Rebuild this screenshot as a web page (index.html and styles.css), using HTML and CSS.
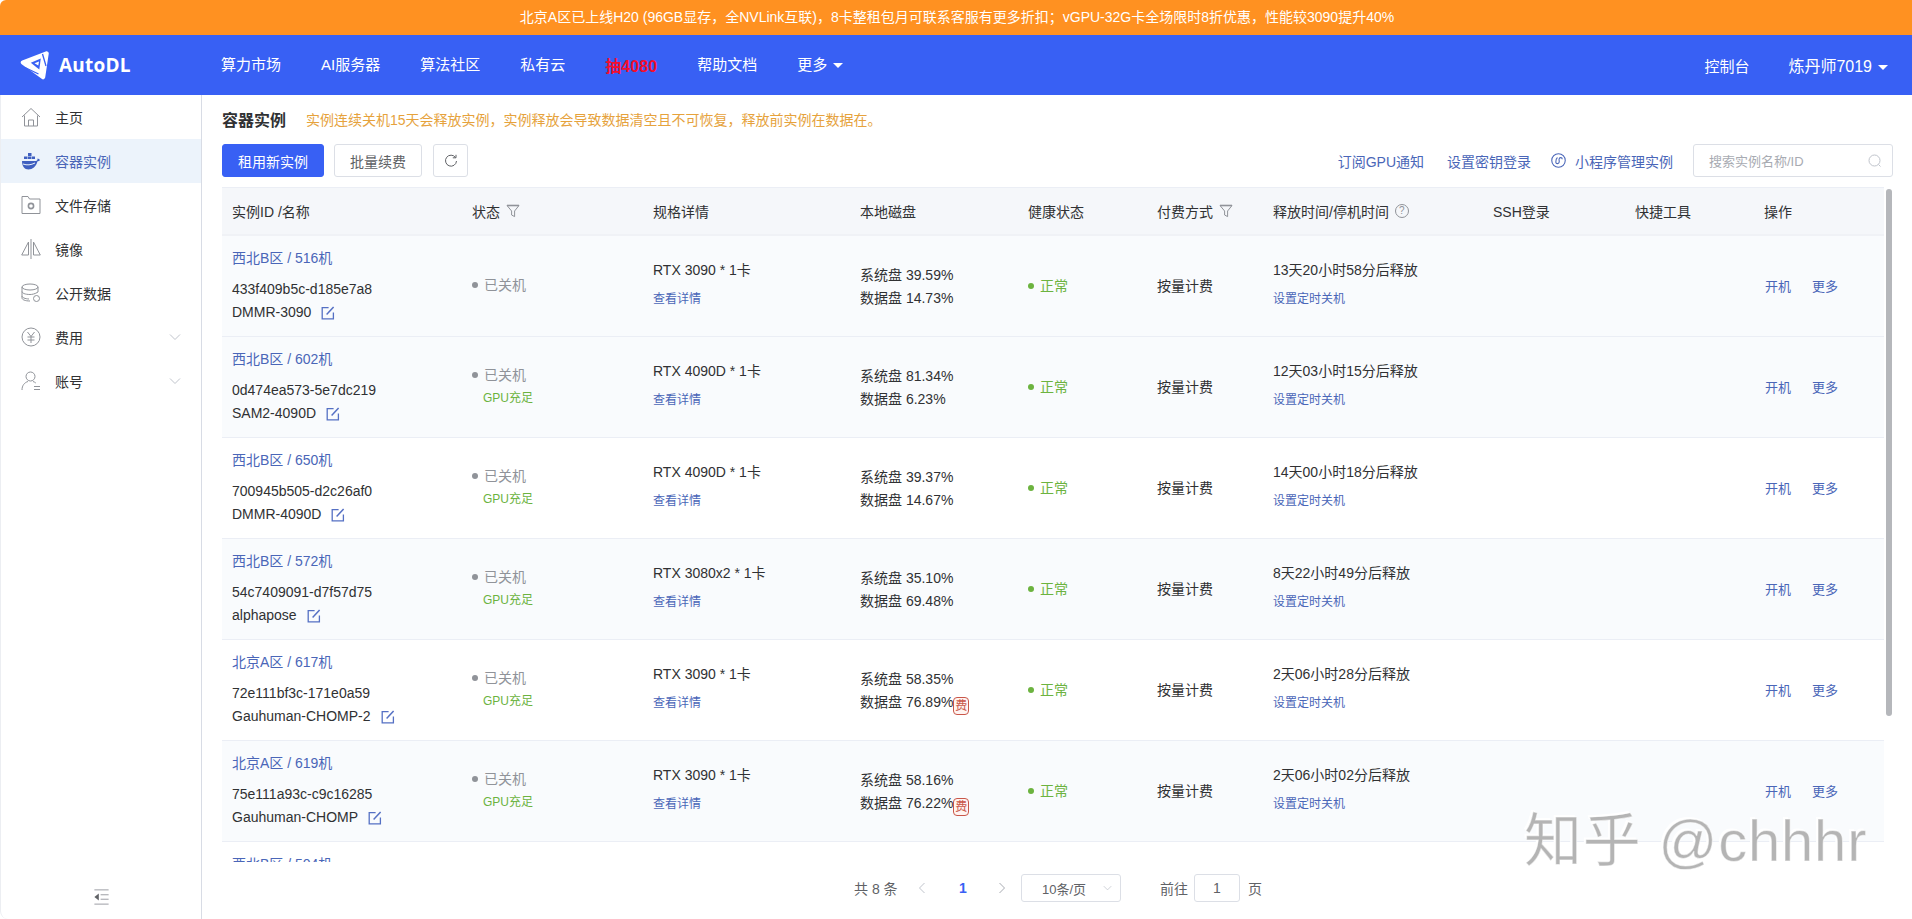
FILE: index.html
```html
<!DOCTYPE html>
<html lang="zh-CN">
<head>
<meta charset="utf-8">
<title>AutoDL</title>
<link rel="stylesheet" href="styles.css">
</head>
<body>
<svg class="defs" width="0" height="0" aria-hidden="true">
  <symbol id="edit" viewBox="0 0 14 14"><path d="M7.600 1.600H1.200v11.200h11.200V6.400" fill="none" stroke="currentColor" stroke-width="1.300"/><path d="M5.600 8.600 12.600.9" fill="none" stroke="currentColor" stroke-width="1.500"/></symbol>
  <symbol id="funnel" viewBox="0 0 14 14"><path d="M1 1.500h12L8.600 7v5.600L5.600 11V7z" fill="none" stroke="currentColor" stroke-width="1"/><path d="M1 1.500h12" fill="none" stroke="currentColor" stroke-width="1.600"/></symbol>
</svg>

<div class="banner">北京A区已上线H20 (96GB显存，全NVLink互联)，8卡整租包月可联系客服有更多折扣；vGPU-32G卡全场限时8折优惠，性能较3090提升40%</div>

<header class="topbar">
  <div class="logo">
    <svg class="logo-mark" viewBox="0 0 30 30"><path d="M26.500 3.500 3 12.500 23 27z" fill="#fff" stroke="#fff" stroke-width="4.500" stroke-linejoin="round"/><path d="M10.800 12.800 20.800 8.600 19.300 19.500z" fill="#3860f4"/><path d="M5 17.500 18.500 24M22.500 4l3.500 12" fill="none" stroke="#3860f4" stroke-width="1.300"/><path d="M14.500 13.200 19 11.500 18.300 15.600z" fill="#fff"/></svg>
    <span class="logo-text">AutoDL</span>
  </div>
  <nav class="nav">
    <a>算力市场</a><a>AI服务器</a><a>算法社区</a><a>私有云</a><a class="hot">抽4080</a><a>帮助文档</a><a>更多<i class="caret"></i></a>
  </nav>
  <div class="user">
    <a>控制台</a><a class="uname">炼丹师7019<i class="caret"></i></a>
  </div>
</header>

<div class="body">
  <aside class="side">
    <ul class="menu">
      <li><svg class="mi" viewBox="0 0 20 20"><path d="M1 10 10 1.500 19 10M3.500 8.500V19h13V8.500M7.500 19v-6h5v6" fill="none" stroke="currentColor"/></svg>主页</li>
      <li class="on"><svg class="mi" viewBox="0 0 20 20"><path d="M1 10h14c1 0 1.600-1.200 1.600-2.500 1 .2 1.800.8 2.400 1.600-.8 1-1.600 1.400-2.600 1.500C15 16 11.500 18.500 7.500 18.500 3.500 18.500 1 15 1 10Z" fill="currentColor"/><path d="M3 5.500h3.500V8H3zM7 5.500h3.500V8H7zM7 2h3.500v3H7zM11 5.500h3V8h-3z" fill="currentColor"/><path d="M2 13c4 1.500 8 1 12-1" fill="none" stroke="#ecf3fb"/></svg>容器实例</li>
      <li><svg class="mi" viewBox="0 0 20 20"><path d="M1 18.500V1.500h6l1.500 2.500h10.500v14.500z" fill="none" stroke="currentColor"/><circle cx="10" cy="11" r="2.600" fill="none" stroke="currentColor" stroke-width="1.600"/></svg>文件存储</li>
      <li><svg class="mi" viewBox="0 0 20 20"><path d="M10 0v20" stroke="currentColor" fill="none"/><path d="M7.500 3v13H.7zM12.500 3v13h6.800z" fill="none" stroke="currentColor"/></svg>镜像</li>
      <li><svg class="mi" viewBox="0 0 20 20"><ellipse cx="9" cy="4" rx="8" ry="3" fill="none" stroke="currentColor"/><path d="M1 4v11c0 1.600 3 3 8 3M1 8.500c0 1.600 3 3 8 3 2 0 5-.5 8-2.500M1 13c0 1.600 3 2.800 7 3M17 4v5" fill="none" stroke="currentColor"/><circle cx="15.500" cy="15.500" r="3" fill="none" stroke="currentColor"/></svg>公开数据</li>
      <li><svg class="mi" viewBox="0 0 20 20"><circle cx="10" cy="10" r="9" fill="none" stroke="currentColor"/><path d="M6.500 5 10 9.500 13.500 5M6.500 10h7M6.500 13h7M10 9.500V16" fill="none" stroke="currentColor"/></svg>费用<svg class="chev" viewBox="0 0 12 8"><path d="m1 1.500 5 5 5-5" fill="none" stroke="currentColor"/></svg></li>
      <li><svg class="mi" viewBox="0 0 20 20"><circle cx="9.500" cy="5.500" r="4.500" fill="none" stroke="currentColor"/><path d="M1 19c0-4.500 2.500-7.500 6-8.500M12 10.500c1 .3 2 .8 2.800 1.500M13 15.500h6M13 18.500h6" fill="none" stroke="currentColor"/></svg>账号<svg class="chev" viewBox="0 0 12 8"><path d="m1 1.500 5 5 5-5" fill="none" stroke="currentColor"/></svg></li>
    </ul>
    <div class="collapse"><svg viewBox="0 0 18 18" width="17" height="16"><path d="M1 1h16M8 6.500h9M8 11.500h9M1 17h16" stroke="#909399" fill="none"/><path d="M6 5v8L1 9z" fill="#606266"/></svg></div>
  </aside>

  <main class="main">
    <div class="title-row">
      <h1>容器实例</h1>
      <span class="warn">实例连续关机15天会释放实例，实例释放会导致数据清空且不可恢复，释放前实例在数据在。</span>
    </div>
    <div class="tools">
      <button class="btn primary">租用新实例</button>
      <button class="btn">批量续费</button>
      <button class="btn icon"><svg viewBox="0 0 14 14" width="14" height="14"><path d="M11.500 3.500A5.500 5.500 0 1 0 12.500 7" fill="none" stroke="#606266"/><path d="M8.800 3.800h3.200V.8" fill="none" stroke="#606266"/></svg></button>
      <div class="tools-right">
        <a class="notify">订阅GPU通知</a>
        <a>设置密钥登录</a>
        <a class="mini"><svg viewBox="0 0 14 14" width="15" height="15"><circle cx="7" cy="7" r="6.300" fill="none" stroke="currentColor"/><path d="M4.500 8.500c0 2 3 1.800 3.200-.2L7.500 5.800c.2-2 3-2 3 0M6 4.200C4.800 5 4.500 6 4.500 8.500" fill="none" stroke="currentColor"/></svg>小程序管理实例</a>
        <label class="search"><span>搜索实例名称/ID</span><svg viewBox="0 0 14 14" width="14" height="14"><circle cx="6.500" cy="6.500" r="5.500" fill="none" stroke="#c0c4cc"/><path d="m10.500 10.500 2 2" stroke="#c0c4cc"/></svg></label>
      </div>
    </div>

    <div class="table-wrap">
      <div class="table">
        <div class="row head">
          <div>实例ID /名称</div>
          <div>状态<svg class="filter"><use href="#funnel"/></svg></div>
          <div>规格详情</div>
          <div>本地磁盘</div>
          <div>健康状态</div>
          <div>付费方式<svg class="filter"><use href="#funnel"/></svg></div>
          <div>释放时间/停机时间<span class="help">?</span></div>
          <div>SSH登录</div>
          <div>快捷工具</div>
          <div>操作</div>
        </div>

        <div class="row tint">
          <div class="id"><a>西北B区 / 516机</a><p>433f409b5c-d185e7a8</p><p>DMMR-3090<svg class="edit"><use href="#edit"/></svg></p></div>
          <div class="st"><p class="off">已关机</p></div>
          <div class="spec"><p>RTX 3090 * 1卡</p><a>查看详情</a></div>
          <div class="disk"><p>系统盘 39.59%</p><p>数据盘 14.73%</p></div>
          <div class="ok">正常</div>
          <div>按量计费</div>
          <div class="rel"><p>13天20小时58分后释放</p><a>设置定时关机</a></div>
          <div></div><div></div>
          <div class="ops"><a>开机</a><a>更多</a></div>
        </div>

        <div class="row tint">
          <div class="id"><a>西北B区 / 602机</a><p>0d474ea573-5e7dc219</p><p>SAM2-4090D<svg class="edit"><use href="#edit"/></svg></p></div>
          <div class="st"><p class="off">已关机</p><p class="gpu">GPU充足</p></div>
          <div class="spec"><p>RTX 4090D * 1卡</p><a>查看详情</a></div>
          <div class="disk"><p>系统盘 81.34%</p><p>数据盘 6.23%</p></div>
          <div class="ok">正常</div>
          <div>按量计费</div>
          <div class="rel"><p>12天03小时15分后释放</p><a>设置定时关机</a></div>
          <div></div><div></div>
          <div class="ops"><a>开机</a><a>更多</a></div>
        </div>

        <div class="row">
          <div class="id"><a>西北B区 / 650机</a><p>700945b505-d2c26af0</p><p>DMMR-4090D<svg class="edit"><use href="#edit"/></svg></p></div>
          <div class="st"><p class="off">已关机</p><p class="gpu">GPU充足</p></div>
          <div class="spec"><p>RTX 4090D * 1卡</p><a>查看详情</a></div>
          <div class="disk"><p>系统盘 39.37%</p><p>数据盘 14.67%</p></div>
          <div class="ok">正常</div>
          <div>按量计费</div>
          <div class="rel"><p>14天00小时18分后释放</p><a>设置定时关机</a></div>
          <div></div><div></div>
          <div class="ops"><a>开机</a><a>更多</a></div>
        </div>

        <div class="row tint">
          <div class="id"><a>西北B区 / 572机</a><p>54c7409091-d7f57d75</p><p>alphapose<svg class="edit"><use href="#edit"/></svg></p></div>
          <div class="st"><p class="off">已关机</p><p class="gpu">GPU充足</p></div>
          <div class="spec"><p>RTX 3080x2 * 1卡</p><a>查看详情</a></div>
          <div class="disk"><p>系统盘 35.10%</p><p>数据盘 69.48%</p></div>
          <div class="ok">正常</div>
          <div>按量计费</div>
          <div class="rel"><p>8天22小时49分后释放</p><a>设置定时关机</a></div>
          <div></div><div></div>
          <div class="ops"><a>开机</a><a>更多</a></div>
        </div>

        <div class="row">
          <div class="id"><a>北京A区 / 617机</a><p>72e111bf3c-171e0a59</p><p>Gauhuman-CHOMP-2<svg class="edit"><use href="#edit"/></svg></p></div>
          <div class="st"><p class="off">已关机</p><p class="gpu">GPU充足</p></div>
          <div class="spec"><p>RTX 3090 * 1卡</p><a>查看详情</a></div>
          <div class="disk"><p>系统盘 58.35%</p><p>数据盘 76.89%<b class="fee">费</b></p></div>
          <div class="ok">正常</div>
          <div>按量计费</div>
          <div class="rel"><p>2天06小时28分后释放</p><a>设置定时关机</a></div>
          <div></div><div></div>
          <div class="ops"><a>开机</a><a>更多</a></div>
        </div>

        <div class="row tint">
          <div class="id"><a>北京A区 / 619机</a><p>75e111a93c-c9c16285</p><p>Gauhuman-CHOMP<svg class="edit"><use href="#edit"/></svg></p></div>
          <div class="st"><p class="off">已关机</p><p class="gpu">GPU充足</p></div>
          <div class="spec"><p>RTX 3090 * 1卡</p><a>查看详情</a></div>
          <div class="disk"><p>系统盘 58.16%</p><p>数据盘 76.22%<b class="fee">费</b></p></div>
          <div class="ok">正常</div>
          <div>按量计费</div>
          <div class="rel"><p>2天06小时02分后释放</p><a>设置定时关机</a></div>
          <div></div><div></div>
          <div class="ops"><a>开机</a><a>更多</a></div>
        </div>

        <div class="row">
          <div class="id"><a>西北B区 / 504机</a></div>
        </div>
      </div>
      <div class="scroll"></div>
    </div>

    <div class="pager">
      <span>共 8 条</span>
      <svg class="pg-arrow" viewBox="0 0 8 12"><path d="M6.500 1 1.500 6l5 5" fill="none" stroke="#c0c4cc"/></svg>
      <b>1</b>
      <svg class="pg-arrow" viewBox="0 0 8 12"><path d="m1.500 1 5 5-5 5" fill="none" stroke="#a8abb2"/></svg>
      <div class="pg-select">10条/页<svg viewBox="0 0 12 8" width="9" height="6"><path d="m1 1.500 5 5 5-5" fill="none" stroke="#c0c4cc"/></svg></div>
      <span class="goto">前往</span>
      <div class="pg-input">1</div>
      <span>页</span>
    </div>
  </main>
</div>

<div class="mark">知乎 @chhhr</div>
</body>
</html>
```

FILE: styles.css
```css
* { box-sizing: border-box; }
html, body { margin: 0; height: 100%; }
body {
  height: 919px;
  overflow: hidden;
  display: flex;
  flex-direction: column;
  position: relative;
  background: #fff;
  color: #303133;
  font-family: "Liberation Sans", "Noto Sans CJK SC", sans-serif;
  font-size: 14px;
}
p { margin: 0; }
a { color: #4a66b8; text-decoration: none; }
.defs { position: absolute; }

.banner {
  height: 35px;
  flex: none;
  background: #ff9121;
  color: #fff;
  font-size: 14px;
  line-height: 35px;
  text-align: center;
  padding-left: 2px;
  border-top-left-radius: 6px;
}

.topbar {
  height: 60px;
  flex: none;
  background: #3860f4;
  display: flex;
  align-items: center;
  color: #fff;
  padding-left: 20px;
}
.logo { display: flex; align-items: center; width: 201px; }
.logo-mark { width: 30px; height: 30px; flex: none; }
.logo-text {
  font-family: "Open Sans", sans-serif;
  font-weight: 700;
  font-size: 19px;
  margin-left: 9px;
  letter-spacing: .2px;
}
.nav { display: flex; gap: 40px; font-size: 15px; }
.topbar a { color: #fff; }
.nav .hot { color: #f40d2c; font-weight: 700; font-size: 16px; letter-spacing: .1px; }
.caret {
  display: inline-block;
  width: 0;
  height: 0;
  border: 5px solid transparent;
  border-top: 5px solid #fff;
  border-bottom: 0;
  margin-left: 6px;
  vertical-align: 2px;
}
.user { margin-left: auto; display: flex; align-items: center; gap: 39px; font-size: 15px; padding-right: 24px; }
.uname { font-size: 16px; }

.body { flex: 1; display: flex; min-height: 0; }
.side {
  width: 202px;
  flex: none;
  border-right: 1px solid #d8dce5;
  border-left: 1px solid #eceef2;
  border-bottom-left-radius: 8px;
  display: flex;
  flex-direction: column;
}
.menu { list-style: none; margin: 0; padding: 0; flex: 1; }
.menu li {
  height: 44px;
  display: flex;
  align-items: center;
  padding-left: 20px;
  font-size: 14px;
  color: #303133;
}
.menu li.on { background: #ecf3fb; color: #4a66b8; }
.mi { width: 20px; height: 20px; margin-right: 14px; color: #909399; flex: none; }
.on .mi { color: #3f5fc0; }
.chev { width: 12px; height: 8px; margin-left: auto; margin-right: 20px; color: #c0c4cc; }
.collapse { height: 30px; display: flex; justify-content: center; align-items: flex-start; }

.main { flex: 1; min-width: 0; padding-left: 20px; display: flex; flex-direction: column; }
.title-row { display: flex; align-items: center; height: 49px; padding-bottom: 2px; }
.title-row h1 { margin: 0; font-size: 16px; font-weight: 700; color: #303133; }
.warn { margin-left: 20px; font-size: 14px; color: #e6a23c; }

.tools { display: flex; align-items: stretch; height: 33px; gap: 10px; padding-right: 19px; }
.btn {
  font: inherit;
  height: 33px;
  width: 88px;
  border: 1px solid #dcdfe6;
  border-radius: 3px;
  background: #fff;
  color: #606266;
  font-size: 14px;
  padding: 0;
}
.btn.primary { width: 102px; background: #3860f4; border-color: #3860f4; color: #fff; }
.btn.icon { width: 35px; margin-left: 1px; display: flex; align-items: center; justify-content: center; }
.tools-right { margin-left: auto; display: flex; align-items: center; gap: 20px; }
.tools-right a { font-size: 14px; color: #4a66b8; }
.tools-right .notify { margin-right: 3px; }
.mini { display: flex; align-items: center; gap: 9px; }
.search {
  width: 200px;
  height: 33px;
  border: 1px solid #dcdfe6;
  border-radius: 3px;
  display: flex;
  align-items: center;
  justify-content: space-between;
  padding: 0 10px 0 15px;
  color: #a8abb2;
  font-size: 13px;
}

.table-wrap {
  margin-top: 10px;
  height: 675px;
  flex: none;
  display: flex;
  overflow: hidden;
  gap: 2px;
  padding-right: 20px;
}
.table { flex: 1; min-width: 0; border-top: 1px solid #ebeef5; }
.scroll { width: 6px; height: 527px; background: #b5b7bb; border-radius: 3px; margin-top: 2px; }

.row {
  display: grid;
  grid-template-columns: 240px 181px 207px 168px 129px 116px 220px 142px 129px 1fr;
  align-items: center;
  height: 101px;
  border-bottom: 1px solid #ebeef5;
  font-size: 14px;
  color: #303133;
}
.row > div { padding-left: 10px; padding-bottom: 2px; }
.row.tint { background: #f9fbfd; }
.row.head {
  height: 48px;
  background: #f5f7fa;
  color: #303133;
  border-bottom: 2px solid #f0f2f6;
}
.row.head > div { display: flex; align-items: center; padding-bottom: 0; }
.filter { width: 14px; height: 14px; margin-left: 6px; color: #909399; }
.help {
  width: 14px;
  height: 14px;
  margin-left: 6px;
  border: 1px solid #909399;
  border-radius: 50%;
  color: #909399;
  font-size: 10px;
  line-height: 12px;
  text-align: center;
}
.id { align-self: start; padding-top: 12px; }
.id a { display: block; line-height: 20px; }
.id p { line-height: 23px; }
.id a + p { margin-top: 10px; }
.edit { width: 14px; height: 14px; margin-left: 10px; vertical-align: -3px; color: #5570c4; }
.row > .st { padding-bottom: 1px; }
.off { color: #909399; line-height: 23px; }
.off::before {
  content: "";
  display: inline-block;
  width: 6px;
  height: 6px;
  border-radius: 50%;
  background: #909399;
  margin-right: 6px;
  vertical-align: 2px;
}
.gpu { color: #6cb33f; font-size: 12px; padding-left: 11px; line-height: 23px; }
.row > .spec, .row > .rel { padding-bottom: 3px; }
.spec p { line-height: 20px; }
.spec a { display: block; margin-top: 9px; font-size: 12px; line-height: 20px; }
.row > .disk { padding-top: 2px; padding-bottom: 0; }
.disk p { line-height: 23px; }
.fee {
  display: inline-block;
  width: 16px;
  height: 18px;
  border: 1px solid #c9574a;
  border-radius: 4px;
  background: #fff4f1;
  color: #c9574a;
  font-size: 12px;
  font-weight: 400;
  line-height: 16px;
  text-align: center;
  vertical-align: -3px;
}
.ok { color: #6cb33f; }
.ok::before {
  content: "";
  display: inline-block;
  width: 6px;
  height: 6px;
  border-radius: 50%;
  background: #6cb33f;
  margin-right: 6px;
  vertical-align: 2px;
}
.rel p { line-height: 20px; }
.rel a { display: block; margin-top: 9px; font-size: 12px; line-height: 20px; }
.row > .ops { display: flex; gap: 21px; padding-left: 11px; font-size: 13px; }

.pager {
  display: flex;
  align-items: center;
  height: 28px;
  margin-top: 12px;
  padding-left: 632px;
  color: #606266;
  font-size: 14px;
}
.pager b { color: #3860f4; font-size: 14px; width: 10px; text-align: center; margin: 0 30px 0 32px; }
.pg-arrow { width: 8px; height: 12px; }
.pager > span:first-child { width: 64px; }
.pg-select {
  width: 100px;
  height: 28px;
  border: 1px solid #dcdfe6;
  border-radius: 3px;
  margin-left: 15px;
  display: flex;
  align-items: center;
  justify-content: space-between;
  padding: 0 8px 0 20px;
  color: #606266;
  font-size: 13px;
}
.goto { margin-left: 39px; }
.pg-input {
  width: 46px;
  height: 28px;
  margin: 0 8px 0 6px;
  border: 1px solid #dcdfe6;
  border-radius: 3px;
  text-align: center;
  line-height: 26px;
}

.mark {
  position: absolute;
  left: 1524px;
  top: 806px;
  font-size: 58px;
  line-height: 70px;
  letter-spacing: .8px;
  color: #b4b4b4;
  white-space: nowrap;
  -webkit-text-stroke: 1px rgba(255, 255, 255, .55);
  text-shadow: -2px -2px 0 #fff;
}
```
